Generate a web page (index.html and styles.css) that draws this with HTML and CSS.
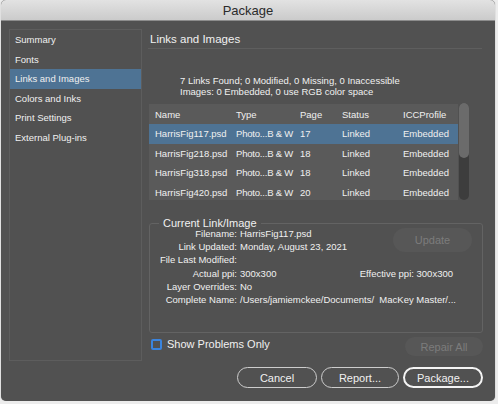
FILE: index.html
```html
<!DOCTYPE html>
<html lang="en">
<head>
  <meta charset="UTF-8" />
  <meta name="viewport" content="width=device-width, initial-scale=1.0" />
  <title>Package</title>
  <link rel="stylesheet" href="styles.css">
</head>
<body>
  <div class="window">
    <header class="titlebar">Package</header>

    <div class="dialog">
      <ul class="sidebar">
        <li>Summary</li>
        <li>Fonts</li>
        <li class="active">Links and Images</li>
        <li>Colors and Inks</li>
        <li>Print Settings</li>
        <li>External Plug-ins</li>
      </ul>

      <section class="main">
        <h2 class="section-title">Links and Images</h2>
        <p class="summary">
          7 Links Found; 0 Modified, 0 Missing, 0 Inaccessible<br>
          Images: 0 Embedded, 0 use RGB color space
        </p>

        <div class="links">
          <table class="links-table">
            <thead>
              <tr>
                <th>Name</th>
                <th>Type</th>
                <th>Page</th>
                <th>Status</th>
                <th>ICCProfile</th>
              </tr>
            </thead>
            <tbody>
              <tr class="selected">
                <td>HarrisFig117.psd</td>
                <td>Photo...B &amp; W</td>
                <td>17</td>
                <td>Linked</td>
                <td>Embedded</td>
              </tr>
              <tr>
                <td>HarrisFig218.psd</td>
                <td>Photo...B &amp; W</td>
                <td>18</td>
                <td>Linked</td>
                <td>Embedded</td>
              </tr>
              <tr>
                <td>HarrisFig318.psd</td>
                <td>Photo...B &amp; W</td>
                <td>18</td>
                <td>Linked</td>
                <td>Embedded</td>
              </tr>
              <tr>
                <td>HarrisFig420.psd</td>
                <td>Photo...B &amp; W</td>
                <td>20</td>
                <td>Linked</td>
                <td>Embedded</td>
              </tr>
            </tbody>
          </table>
          <div class="scrollbar"><div class="thumb"></div></div>
        </div>

        <fieldset class="current">
          <legend>Current Link/Image</legend>
          <div class="details">
            <span class="label">Filename:</span>
            <span>HarrisFig117.psd</span>
            <button class="pill disabled update" disabled>Update</button>

            <span class="label">Link Updated:</span>
            <span>Monday, August 23, 2021</span>

            <span class="label">File Last Modified:</span>
            <span></span>

            <span class="label">Actual ppi:</span>
            <span class="wide split"><span>300x300</span><span>Effective ppi: 300x300</span></span>

            <span class="label">Layer Overrides:</span>
            <span>No</span>

            <span class="label">Complete Name:</span>
            <span class="wide">/Users/jamiemckee/Documents/&nbsp; MacKey Master/...</span>
          </div>
        </fieldset>

        <div class="options">
          <label class="check"><span class="box"></span>Show Problems Only</label>
          <button class="pill disabled repair" disabled>Repair All</button>
        </div>

        <div class="actions">
          <button class="pill cancel">Cancel</button>
          <button class="pill report">Report...</button>
          <button class="pill default">Package...</button>
        </div>
      </section>
    </div>
  </div>
</body>
</html>
```

FILE: styles.css
```css
* {
  margin: 0;
  padding: 0;
  box-sizing: border-box;
}

body {
  font-family: 'Liberation Sans', Arial, sans-serif;
  font-size: 9.5px;
  background-color: #ececec;
  color: #f0f0f0;
}

.window {
  width: 494px;
  height: 401px;
  margin-left: 1px;
  background-color: #515151;
  border-radius: 5px;
  overflow: hidden;
  box-shadow: 0 0 1px rgba(0, 0, 0, 0.5);
}

.titlebar {
  height: 21px;
  padding-top: 3px;
  line-height: 16px;
  text-align: center;
  font-size: 13px;
  color: #2b2b2b;
  background: linear-gradient(#e2e2e2, #cbcbcb);
  border-bottom: 1px solid #8c8c8c;
}

.dialog {
  display: flex;
  padding: 8px 11px 0 8px;
}

/* left list of package sections */
.sidebar {
  list-style: none;
  width: 133px;
  height: 332px;
  border: 1px solid #5d5d5d;
}

.sidebar li {
  height: 19.5px;
  line-height: 19.5px;
  padding-left: 5px;
}

.sidebar li.active {
  background-color: #4e7394;
}

.main {
  width: 335px;
  margin-left: 6px;
}

.section-title {
  font-size: 11.5px;
  font-weight: normal;
  line-height: 16px;
  padding: 2px 2px 1px;
  border-bottom: 1px solid #5e5e5e;
  margin-right: 1px;
}

.summary {
  line-height: 11px;
  margin-top: 25.5px;
  padding-left: 32px;
}

/* links list with its scrollbar */
.links {
  display: flex;
  width: 322px;
  height: 98px;
  margin: 5.5px 0 0 1px;
  padding-top: 2px;
  overflow: hidden;
}

.links-table {
  width: 309px;
  border-collapse: collapse;
  table-layout: fixed;
  background-color: #5a5a5a;
}

.links-table th,
.links-table td {
  height: 19.5px;
  padding-left: 6px;
  text-align: left;
  font-weight: normal;
  white-space: nowrap;
}

.links-table td:nth-child(2) {
  letter-spacing: -0.2px;
}

.links-table th {
  height: 20px;
}

.links-table th:nth-child(1) { width: 81px; }
.links-table th:nth-child(2) { width: 64px; }
.links-table th:nth-child(3) { width: 42px; }
.links-table th:nth-child(4) { width: 61px; }
.links-table th:nth-child(5) { width: 61px; }

.links-table tr.selected td {
  background-color: #4e7394;
}

.scrollbar {
  width: 10px;
  margin: -1px 0 0 1px;
  background-color: #3d3d3d;
  border-radius: 5px;
}

.thumb {
  height: 55px;
  background-color: #6b6b6b;
  border-radius: 5px;
}

/* current link group */
.current {
  width: 334px;
  margin: 16px 0 0 1px;
  border: 1px solid #636363;
  border-radius: 3px;
  padding: 0 10px 26px 9px;
}

.current legend {
  padding: 0 4px;
  font-size: 11px;
  line-height: 14px;
}

.details {
  display: grid;
  grid-template-columns: 78px 150px 79px;
  grid-auto-rows: 13.2px;
  column-gap: 3px;
  line-height: 13.2px;
  margin-top: -3px;
  white-space: nowrap;
}

.details .label {
  text-align: right;
  grid-column: 1;
}

.details .wide {
  grid-column: 2 / 4;
}

.details .split {
  display: flex;
  justify-content: space-between;
  padding-right: 19px;
}

.pill {
  font-family: 'Liberation Sans', Arial, sans-serif;
  font-size: 11px;
  color: #f0f0f0;
  background: transparent;
  border: 1.5px solid #cdcdcd;
  border-radius: 11px;
  height: 21px;
}

.pill.disabled {
  border: none;
  background-color: #575757;
  color: #7c7c7c;
}

.update {
  grid-column: 3;
  grid-row: 1 / span 2;
  align-self: center;
  height: 24px;
  border-radius: 12px;
}

.options {
  display: flex;
  justify-content: space-between;
  align-items: flex-start;
  margin-top: 4px;
  padding-left: 3px;
}

.check {
  display: flex;
  align-items: center;
  gap: 5px;
  margin-top: 1px;
  font-size: 11px;
  line-height: 12px;
}

.box {
  display: block;
  flex: none;
  width: 11px;
  height: 11px;
  border: 2px solid #3a84de;
  border-radius: 2px;
}

.repair {
  width: 78px;
  height: 19px;
  border-radius: 10px;
}

.actions {
  display: flex;
  justify-content: flex-end;
  gap: 4px;
  margin-top: 11px;
}

.cancel { width: 80px; }
.report { width: 78px; }

.pill.default {
  width: 80px;
  border: 2px solid #f4f4f4;
}
```
